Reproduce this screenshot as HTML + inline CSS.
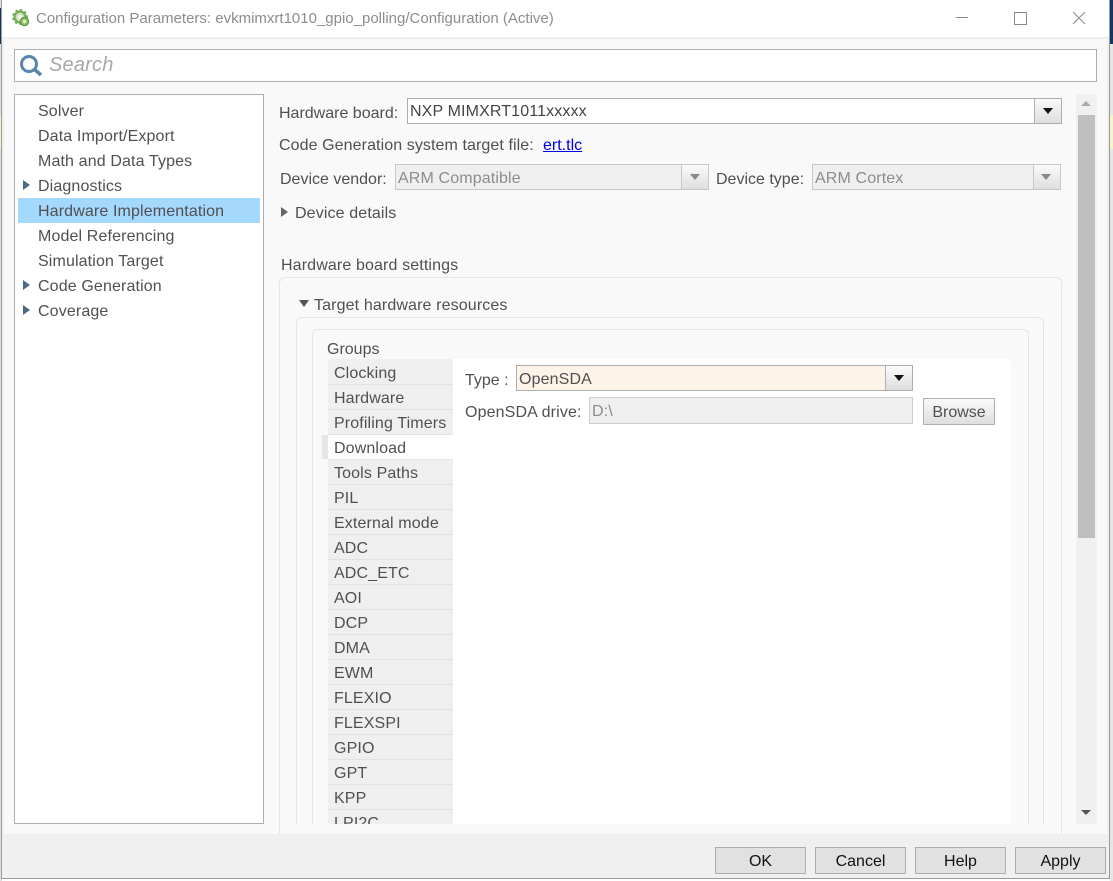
<!DOCTYPE html>
<html><head><meta charset="utf-8"><style>
html,body{margin:0;padding:0;width:1113px;height:881px;overflow:hidden;background:#fff;font-family:"Liberation Sans",sans-serif;font-size:16px;color:#505050}
div,a,span.t{position:absolute;box-sizing:border-box;white-space:nowrap}
.t{line-height:20px;height:20px;letter-spacing:.13px}
.n{letter-spacing:0}
.dd{background:linear-gradient(#fafafa,#dedede);border-left:1px solid #b0b0b0}
.ar{width:0;height:0;border-left:5px solid transparent;border-right:5px solid transparent;border-top:6px solid #111}
.ag{border-top-color:#888}
.tab{left:328px;width:125px;height:25px;background:#efefef;border-bottom:1px solid #e2e2e2;padding:4px 0 0 6px;line-height:20px;letter-spacing:.13px}
.btn{top:847px;width:91px;height:27px;background:#e1e1e1;border:1px solid #adadad;color:#111;text-align:center;line-height:27px;font-size:16px}
.tri{width:0;height:0;border-top:5px solid transparent;border-bottom:5px solid transparent;border-left:7px solid #4c6a85}
</style></head><body>
<!-- background behind window -->
<div style="left:0;top:0;width:2px;height:881px;background:#e0e0e0"></div>
<div style="left:0;top:8px;width:2px;height:36px;background:#12395f"></div>
<div style="left:1110px;top:0;width:3px;height:881px;background:#e6e6e6"></div>
<div style="left:1110px;top:0;width:3px;height:44px;background:#12395f"></div>
<div style="left:1110px;top:115px;width:3px;height:34px;background:#f7f3c8"></div>
<div style="left:0;top:115px;width:2px;height:34px;background:#f7f3c8"></div>
<!-- window -->
<div style="left:1px;top:0;width:1109px;height:879px;background:#f0f0f0;border-left:1px solid #9a9a9a;border-right:1px solid #9a9a9a;border-bottom:1px solid #9a9a9a"></div>
<div style="left:2px;top:0;width:1107px;height:37px;background:#fff"></div>
<svg style="position:absolute;left:12px;top:9px" width="19" height="19" viewBox="0 0 19 19"><circle cx="8" cy="8" r="5.5" fill="#cfe5ba" stroke="#74ad5a" stroke-width="2.2"/><circle cx="8" cy="8" r="7.2" fill="none" stroke="#74ad5a" stroke-width="1.5" stroke-dasharray="2.4 2.4"/><circle cx="8" cy="8" r="2" fill="#fff"/><circle cx="12.5" cy="12.5" r="4" fill="#9ccb72" stroke="#5f9a47" stroke-width="1.4"/><circle cx="12.5" cy="12.5" r="1.4" fill="#eef8e2"/></svg>
<span class="t n" style="position:absolute;left:36px;top:9px;color:#8d8d8d;font-size:15px">Configuration Parameters: evkmimxrt1010_gpio_polling/Configuration (Active)</span>
<div style="left:956px;top:17px;width:12px;height:1px;background:#8a8a8a"></div>
<div style="left:1014px;top:12px;width:13px;height:13px;border:1px solid #8a8a8a"></div>
<svg style="position:absolute;left:1072px;top:11px" width="14" height="14"><path d="M1 1L13 13M13 1L1 13" stroke="#8a8a8a" stroke-width="1" fill="none"/></svg>
<!-- main panel -->
<div style="left:4px;top:39px;width:1103px;height:795px;background:#f9f9f9"></div>
<div style="left:14px;top:49px;width:1083px;height:33px;background:#fff;border:1px solid #adadad"></div>
<svg style="position:absolute;left:19px;top:54px" width="24" height="24"><circle cx="10" cy="10" r="7.5" fill="none" stroke="#5b84ad" stroke-width="3"/><path d="M15 15L22 21" stroke="#5b84ad" stroke-width="3.5"/></svg>
<span class="t" style="position:absolute;left:49px;top:55px;font-size:20px;font-style:italic;color:#a8a8a8;letter-spacing:.2px">Search</span>
<!-- tree -->
<div style="left:14px;top:94px;width:250px;height:730px;background:#fff;border:1px solid #adadad"></div>
<div style="left:18px;top:198px;width:242px;height:25px;background:#a4d8fd"></div>
<span class="t" style="position:absolute;left:38px;top:102px">Solver</span>
<span class="t" style="position:absolute;left:38px;top:127px">Data Import/Export</span>
<span class="t" style="position:absolute;left:38px;top:152px">Math and Data Types</span>
<span class="t" style="position:absolute;left:38px;top:177px">Diagnostics</span>
<span class="t" style="position:absolute;left:38px;top:202px">Hardware Implementation</span>
<span class="t" style="position:absolute;left:38px;top:227px">Model Referencing</span>
<span class="t" style="position:absolute;left:38px;top:252px">Simulation Target</span>
<span class="t" style="position:absolute;left:38px;top:277px">Code Generation</span>
<span class="t" style="position:absolute;left:38px;top:302px">Coverage</span>
<div class="tri" style="left:23px;top:180px"></div>
<div class="tri" style="left:23px;top:280px"></div>
<div class="tri" style="left:23px;top:305px"></div>
<!-- right top -->
<span class="t n" style="position:absolute;left:279px;top:104px">Hardware board:</span>
<div style="left:407px;top:98px;width:655px;height:26px;background:#fff;border:1px solid #adadad"></div>
<span class="t" style="position:absolute;left:410px;top:102px;color:#444">NXP MIMXRT1011xxxxx</span>
<div class="dd" style="left:1034px;top:99px;width:27px;height:24px"></div>
<div class="ar" style="left:1043px;top:108px"></div>
<span class="t" style="position:absolute;left:279px;top:136px;letter-spacing:.09px">Code Generation system target file:</span>
<a style="left:543px;top:136px;line-height:20px;color:#0000ee;text-decoration:underline">ert.tlc</a>
<span class="t n" style="position:absolute;left:280px;top:170px">Device vendor:</span>
<div style="left:395px;top:164px;width:314px;height:26px;background:#efefef;border:1px solid #c8c8c8"></div>
<span class="t" style="position:absolute;left:398px;top:169px;color:#8c8c8c">ARM Compatible</span>
<div class="dd" style="left:681px;top:165px;width:27px;height:24px;border-left-color:#c8c8c8"></div>
<div class="ar ag" style="left:690px;top:174px"></div>
<span class="t n" style="position:absolute;left:716px;top:170px">Device type:</span>
<div style="left:812px;top:164px;width:249px;height:26px;background:#efefef;border:1px solid #c8c8c8"></div>
<span class="t" style="position:absolute;left:815px;top:169px;color:#8c8c8c">ARM Cortex</span>
<div class="dd" style="left:1033px;top:165px;width:27px;height:24px;border-left-color:#c8c8c8"></div>
<div class="ar ag" style="left:1041px;top:174px"></div>
<div class="tri" style="left:281px;top:207px;border-left-color:#666"></div>
<span class="t" style="position:absolute;left:295px;top:204px">Device details</span>
<span class="t" style="position:absolute;left:281px;top:256px">Hardware board settings</span>
<!-- nested panels -->
<div style="left:279px;top:277px;width:783px;height:557px;border:1px solid #e6e6e6;border-bottom:0;border-radius:6px 6px 0 0"></div>
<div class="ar" style="left:299px;top:300px;border-top:7px solid #555"></div>
<span class="t" style="position:absolute;left:314px;top:296px">Target hardware resources</span>
<div style="left:296px;top:317px;width:748px;height:507px;border:1px solid #e6e6e6;border-bottom:0;border-radius:6px 6px 0 0"></div>
<div style="left:312px;top:329px;width:717px;height:495px;border:1px solid #e6e6e6;border-bottom:0;border-radius:6px 6px 0 0"></div>
<span class="t n" style="position:absolute;left:327px;top:340px">Groups</span>
<div style="left:453px;top:359px;width:558px;height:465px;background:#fff;border-radius:0 6px 0 0"></div>
<div style="left:328px;top:359px;width:125px;height:465px;overflow:hidden;background:#efefef"></div>
<div class="tab" style="top:360px">Clocking</div>
<div class="tab" style="top:385px">Hardware</div>
<div class="tab" style="top:410px">Profiling Timers</div>
<div class="tab" style="top:435px;background:#fff">Download</div>
<div style="left:322px;top:435px;width:6px;height:24px;background:#e6e6e6"></div>
<div class="tab" style="top:460px">Tools Paths</div>
<div class="tab" style="top:485px">PIL</div>
<div class="tab" style="top:510px">External mode</div>
<div class="tab" style="top:535px">ADC</div>
<div class="tab" style="top:560px">ADC_ETC</div>
<div class="tab" style="top:585px">AOI</div>
<div class="tab" style="top:610px">DCP</div>
<div class="tab" style="top:635px">DMA</div>
<div class="tab" style="top:660px">EWM</div>
<div class="tab" style="top:685px">FLEXIO</div>
<div class="tab" style="top:710px">FLEXSPI</div>
<div class="tab" style="top:735px">GPIO</div>
<div class="tab" style="top:760px">GPT</div>
<div class="tab" style="top:785px">KPP</div>
<div class="tab" style="top:810px;height:14px;overflow:hidden;border:0">LPI2C</div>
<!-- form -->
<span class="t n" style="position:absolute;left:465px;top:371px">Type :</span>
<div style="left:516px;top:365px;width:397px;height:26px;background:#fdf3e8;border:1px solid #adadad"></div>
<span class="t" style="position:absolute;left:519px;top:370px">OpenSDA</span>
<div class="dd" style="left:885px;top:366px;width:27px;height:24px"></div>
<div class="ar" style="left:894px;top:375px"></div>
<span class="t" style="position:absolute;left:465px;top:403px">OpenSDA drive:</span>
<div style="left:589px;top:397px;width:324px;height:27px;background:#efefef;border:1px solid #ccc"></div>
<span class="t" style="position:absolute;left:592px;top:402px;color:#8c8c8c">D:\</span>
<div style="left:923px;top:398px;width:72px;height:27px;background:linear-gradient(#fafafa,#dedede);border:1px solid #b0b0b0;text-align:center;line-height:27px">Browse</div>
<!-- scrollbar -->
<div style="left:1076px;top:94px;width:21px;height:730px;background:#f0f0f0"></div>
<div style="left:1078px;top:115px;width:17px;height:423px;background:#bfbfbf"></div>
<div class="ar" style="left:1081px;top:101px;border-top:0;border-bottom:5px solid #aaa"></div>
<div class="ar" style="left:1081px;top:810px;border-top:5px solid #555"></div>
<!-- footer -->
<div style="left:2px;top:834px;width:1107px;height:44px;background:#f0f0f0"></div>
<div class="btn" style="left:715px">OK</div>
<div class="btn" style="left:815px">Cancel</div>
<div class="btn" style="left:915px">Help</div>
<div class="btn" style="left:1015px">Apply</div>
</body></html>
